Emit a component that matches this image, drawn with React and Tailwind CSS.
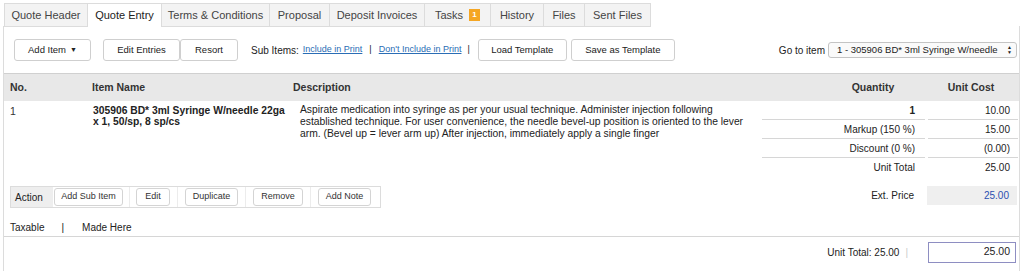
import React from "react";

const tabs = [
    { label: "Quote Header", w: "w-[84px]" },
    { label: "Quote Entry", w: "w-[74px]", active: true },
    { label: "Terms & Conditions", w: "w-[108px]" },
    { label: "Proposal", w: "w-[60px]" },
    { label: "Deposit Invoices", w: "w-[95px]" },
    { label: "Tasks", w: "w-[66px]", badge: "1" },
    { label: "History", w: "w-[53px]" },
    { label: "Files", w: "w-[41px]" },
    { label: "Sent Files", w: "w-[66px]" },
];

const costRows = [
    { label: "1", value: "10.00", bold: true },
    { label: "Markup (150 %)", value: "15.00" },
    { label: "Discount (0 %)", value: "(0.00)" },
    { label: "Unit Total", value: "25.00", last: true },
];

const ToolButton = ({ children, className = "" }) => (
    <button className={"h-[22px] rounded-[3px] border border-[#cfcfcf] bg-white text-[9.5px] text-[#222] flex items-center justify-center " + className}>
        {children}
    </button>
);

const ActionButton = ({ children, className = "" }) => (
    <button className={"h-[18px] rounded-[3px] border border-[#d4d4d4] bg-white text-[9px] text-[#333] flex items-center justify-center " + className}>
        {children}
    </button>
);

const App = () => {
    return (
        <div className="w-[1024px] h-[271px] overflow-hidden bg-white text-[#333] font-['Liberation_Sans',Arial,sans-serif]">
            {/* tabs */}
            <div className="flex pl-[4px] pt-[3px]">
                {tabs.map((tab, i) => (
                    <div
                        key={tab.label}
                        className={
                            "h-[24px] flex items-center justify-center gap-[6px] text-[11px] border-t border-r border-[#dcdcdc] " +
                            tab.w +
                            (i === 0 ? " border-l" : "") +
                            (tab.active ? " bg-white text-[#222]" : " bg-[#f3f3f3] border-b text-[#444]")
                        }
                    >
                        <span>{tab.label}</span>
                        {tab.badge && (
                            <span className="w-[11px] h-[12px] bg-[#f5a623] text-white text-[8px] font-bold flex items-center justify-center">
                                {tab.badge}
                            </span>
                        )}
                    </div>
                ))}
            </div>

            {/* panel */}
            <div className="ml-[3px] w-[1017px] border-l border-r border-[#dcdcdc] -mt-px">
                {/* toolbar */}
                <div className="flex items-center h-[47px] pt-[1px]">
                    <ToolButton className="ml-[10px] w-[77px] gap-[4px]">
                        Add Item <span className="text-[7px]">▼</span>
                    </ToolButton>
                    <ToolButton className="ml-[12px] w-[77px]">Edit Entries</ToolButton>
                    <ToolButton className="w-[58px]">Resort</ToolButton>
                    <div className="ml-[13px] flex items-center text-[10px] text-[#222]">
                        <span>Sub Items:</span>
                        <span className="ml-[4px] text-[9px] text-[#2a6db5] underline">Include in Print</span>
                        <span className="mx-[7px] text-[9px]">|</span>
                        <span className="text-[9px] text-[#2a6db5] underline">Don't Include in Print</span>
                        <span className="ml-[6px] text-[9px]">|</span>
                    </div>
                    <ToolButton className="ml-[8px] w-[89px]">Load Template</ToolButton>
                    <ToolButton className="ml-[4px] w-[104px]">Save as Template</ToolButton>
                    <div className="ml-auto mr-[2px] flex items-center gap-[3px] text-[10px] text-[#222]">
                        <span>Go to item</span>
                        <div className="w-[189px] h-[16px] rounded-[3px] border border-[#c4c4c4] bg-[#fafafa] flex items-center justify-between pl-[8px] pr-[4px] text-[9.5px]">
                            <span>1 - 305906 BD* 3ml Syringe W/needle</span>
                            <span className="flex flex-col text-[5px] leading-[5px]">
                                <span>▲</span>
                                <span>▼</span>
                            </span>
                        </div>
                    </div>
                </div>

                {/* table header */}
                <div className="flex items-center h-[28px] bg-[#e8e8e8] border-t border-[#d0d0d0] text-[10.5px] font-bold text-[#333]">
                    <div className="w-[81px] pl-[6px]">No.</div>
                    <div className="w-[205px] pl-[7px]">Item Name</div>
                    <div className="w-[553px] pl-[3px]">Description</div>
                    <div className="w-[60px] text-center">Quantity</div>
                    <div className="w-[25px]"></div>
                    <div className="w-[86px] text-center">Unit Cost</div>
                </div>

                {/* item row */}
                <div className="border-b border-[#d6d6d6]">
                    <div className="flex h-[85px]">
                        <div className="w-[81px] pl-[6px] pt-[4px] text-[10.5px] leading-[12px]">1</div>
                        <div className="w-[207px] pl-[8px] pt-[4px] text-[10.3px] leading-[11px] font-bold text-[#222] whitespace-nowrap">
                            <div>305906 BD* 3ml Syringe W/needle 22ga</div>
                            <div>x 1, 50/sp, 8 sp/cs</div>
                        </div>
                        <div className="w-[470px] pl-[8px] pt-[3px] text-[10.3px] leading-[12px] text-[#222] whitespace-nowrap">
                            <div>Aspirate medication into syringe as per your usual technique. Administer injection following</div>
                            <div>established technique. For user convenience, the needle bevel-up position is oriented to the lever</div>
                            <div>arm. (Bevel up = lever arm up) After injection, immediately apply a single finger</div>
                        </div>
                        <div className="flex flex-col">
                            {costRows.map((row) => (
                                <div key={row.label} className="flex gap-[3px] h-[19px] text-[10px] text-[#222]">
                                    <div className={"w-[163px] pr-[10px] flex items-center justify-end " + (row.last ? "" : "border-b border-[#d6d6d6]") + (row.bold ? " font-bold" : "")}>
                                        {row.label}
                                    </div>
                                    <div className={"w-[90px] pr-[8px] flex items-center justify-end " + (row.last ? "" : "border-b border-[#d6d6d6]")}>
                                        {row.value}
                                    </div>
                                </div>
                            ))}
                        </div>
                    </div>

                    <div className="flex items-start h-[22px]">
                        <div className="ml-[6px] w-[371px] h-[22px] border border-[#dcdcdc] flex items-center">
                            <div className="h-full w-[42px] bg-[#eeeeee] flex items-center pl-[4px] text-[10px] text-[#222]">Action</div>
                            <ActionButton className="ml-px w-[69px]">Add Sub Item</ActionButton>
                            <div className="w-px h-full bg-[#ececec] mx-[6px]"></div>
                            <ActionButton className="w-[34px]">Edit</ActionButton>
                            <div className="w-px h-full bg-[#ececec] mx-[7px]"></div>
                            <ActionButton className="w-[53px]">Duplicate</ActionButton>
                            <div className="w-px h-full bg-[#ececec] mx-[7px]"></div>
                            <ActionButton className="w-[50px]">Remove</ActionButton>
                            <div className="w-px h-full bg-[#ececec] mx-[7px]"></div>
                            <ActionButton className="w-[53px]">Add Note</ActionButton>
                        </div>
                        <div className="ml-auto flex gap-[3px] h-[19px] text-[10px] text-[#222]">
                            <div className="w-[163px] pr-[10px] flex items-center justify-end">Ext. Price</div>
                            <div className="w-[90px] pr-[8px] bg-[#efefef] text-[#2b50b0] flex items-center justify-end">25.00</div>
                        </div>
                        <div className="w-[2px]"></div>
                    </div>

                    <div className="flex items-center h-[28px] pt-[10px] pl-[6px] text-[10px] text-[#222]">
                        <span>Taxable</span>
                        <span className="ml-[17px]">|</span>
                        <span className="ml-[18px]">Made Here</span>
                    </div>
                </div>

                {/* footer */}
                <div className="flex items-center justify-end h-[34px] pb-[4px] text-[10px] text-[#222]">
                    <span>Unit Total: 25.00</span>
                    <span className="ml-[6px] text-[#ccc]">|</span>
                    <div className="ml-[20px] mr-[3px] w-[88px] h-[21px] border border-[#8e8ec2] flex items-center justify-end pr-[5px] text-[10.5px]">
                        25.00
                    </div>
                </div>
            </div>
        </div>
    );
};

export default App;
